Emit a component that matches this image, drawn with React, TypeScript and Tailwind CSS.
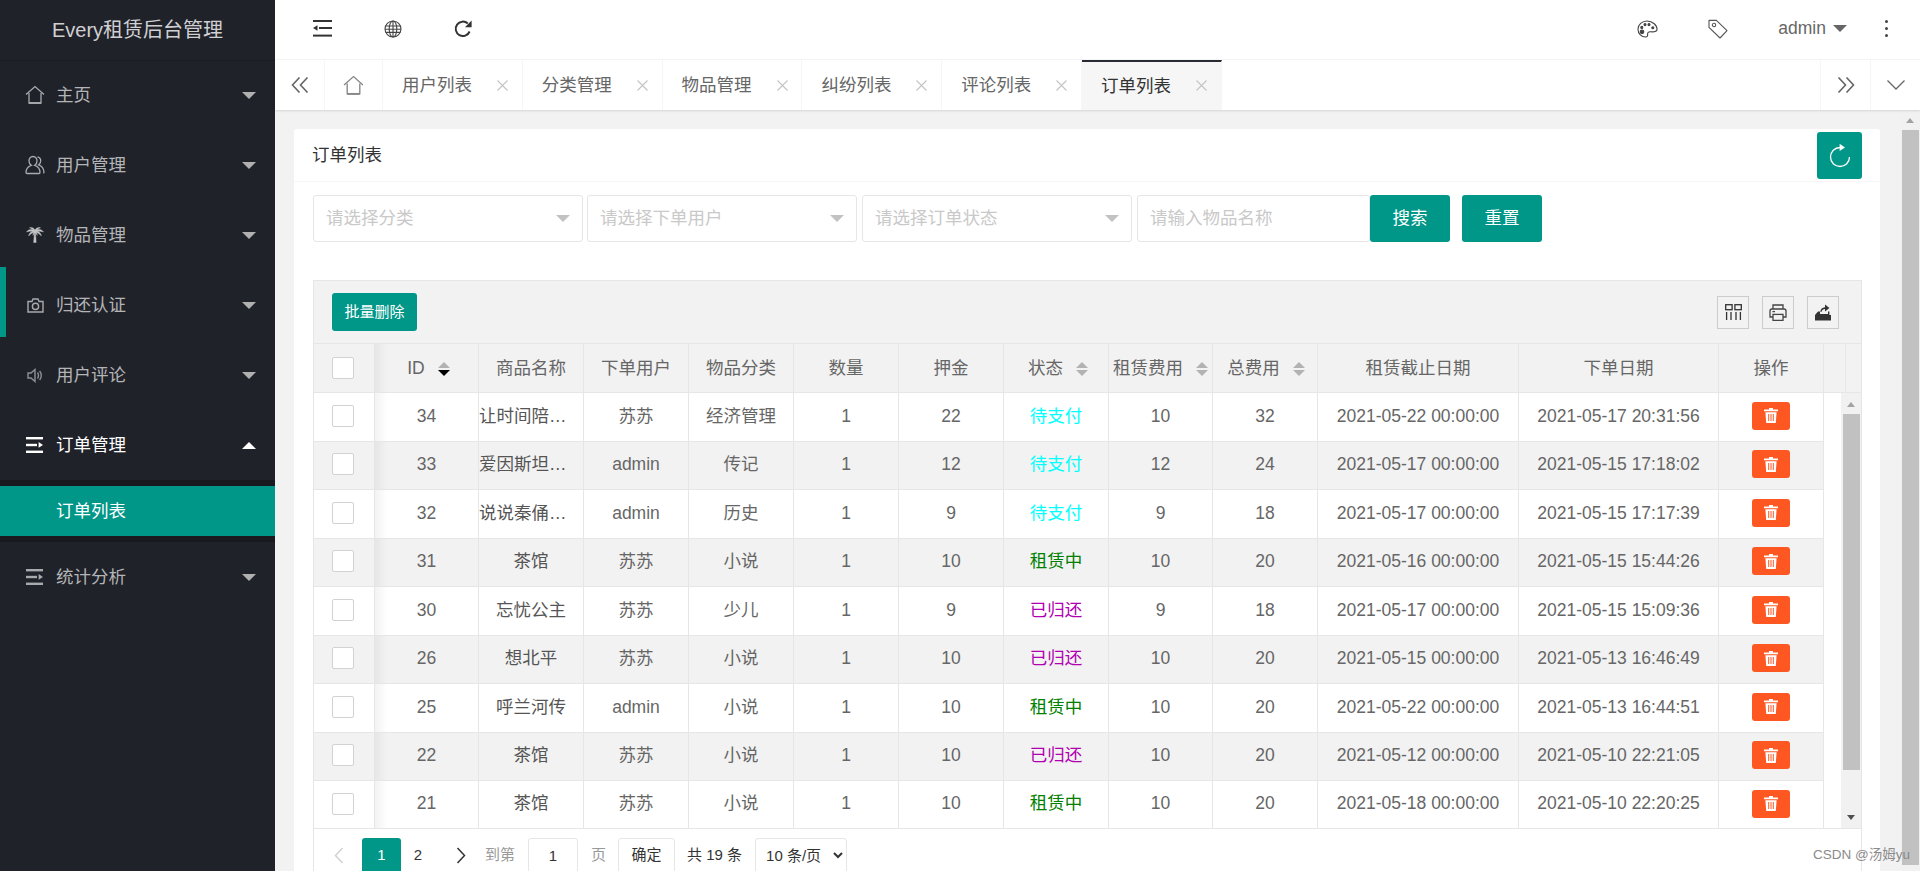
import React from "react";

const Caret = ({ up = false, color = "border-t-[#b0b0b0]" }: { up?: boolean; color?: string }) => (
  <span
    className={
      up
        ? "block w-0 h-0 border-x-[7px] border-x-transparent border-b-[7px] border-b-white"
        : `block w-0 h-0 border-x-[7px] border-x-transparent border-t-[7px] ${color}`
    }
  />
);

const Bars = ({ c }: { c: string }) => (
  <svg width="18" height="16" viewBox="0 0 18 16" fill={c}>
    <rect x="0" y="0" width="17" height="2.4" />
    <rect x="0" y="6.8" width="11" height="2.4" />
    <path d="M12.6 5 L17 7.9 L12.6 10.8 Z" />
    <rect x="0" y="13.6" width="17" height="2.4" />
  </svg>
);

const HomeIcon = ({ c = "#a9aaad", s = 20 }: { c?: string; s?: number }) => (
  <svg width={s} height={s} viewBox="0 0 20 20" fill="none" stroke={c} strokeWidth="1.3">
    <path d="M1 9.5 L10 1.5 L19 9.5" />
    <path d="M4 8 V18 H16 V8" />
    <path d="M4 18 H16" strokeWidth="1.8" />
  </svg>
);

const UserIcon = () => (
  <svg width="20" height="20" viewBox="0 0 20 20" fill="none" stroke="#a9aaad" strokeWidth="1.3">
    <path d="M8 1.5 C5.2 1.5 4 3.7 4 6 C4 8 5 9.6 6.3 10.4 C3.2 11.4 1 13.8 1 17.6 C1 18.2 1.4 18.5 2 18.5 H14 C14.6 18.5 15 18.2 15 17.6 C15 13.8 12.8 11.4 9.7 10.4 C11 9.6 12 8 12 6 C12 3.7 10.8 1.5 8 1.5 Z" />
    <path d="M12.5 1.8 C15 2.4 16 4.4 15.6 6.6 C15.4 8 14.6 9.2 13.6 9.8 C16.6 11 18.8 13.4 19 17 C19 17.6 18.8 18 18.4 18.3" />
  </svg>
);

const PalmIcon = () => (
  <svg width="18" height="16" viewBox="0 0 18 16" fill="#c2c3c5" stroke="#c2c3c5" strokeWidth="0.4">
    <path d="M9 3 C8 1 6 0 3.5 .8 C5 1.3 6.2 2 6.8 3 C4.5 2 2 2.6 .5 5 C2.6 4.3 4.8 4.2 6.4 4.6 C4.4 5.2 3 6.6 2.6 9 C4.2 7.2 6 6 7.6 5.6 C7 6.6 6.8 7.4 7 8.4 C7.6 7.2 8 6.6 8.4 6.2 L7.6 15.5 H10.2 L9.6 6.2 C10 6.6 10.6 7.2 11.2 8.4 C11.3 7.4 11 6.6 10.4 5.6 C12 6 13.8 7.2 15.4 9 C15 6.6 13.6 5.2 11.6 4.6 C13.2 4.2 15.4 4.3 17.5 5 C16 2.6 13.5 2 11.2 3 C11.8 2 13 1.3 14.5 .8 C12 0 10 1 9 3 Z" />
  </svg>
);

const CameraIcon = () => (
  <svg width="17" height="15" viewBox="0 0 17 15" fill="none" stroke="#a9aaad" strokeWidth="1.4">
    <path d="M1 3.5 H5 L6 1 H11 L12 3.5 H16 V14 H1 Z" />
    <circle cx="8.5" cy="8.4" r="3.1" />
  </svg>
);

const SpeakerIcon = () => (
  <svg width="16" height="15" viewBox="0 0 16 15" fill="none" stroke="#8f9094" strokeWidth="1.4">
    <path d="M1 5 H4 L8 1.5 V13.5 L4 10 H1 Z" />
    <path d="M10.5 4.5 C11.8 6 11.8 9 10.5 10.5" />
    <path d="M12.6 3 C14.8 5.4 14.8 9.6 12.6 12" />
  </svg>
);

const Nav = ({ icon, label, bar = false, open = false }: { icon: React.ReactNode; label: string; bar?: boolean; open?: boolean }) => (
  <div className={`relative flex h-[70px] items-center pl-[25px] pr-[19px] text-[17.5px] ${open ? "text-white" : "text-[#b4b5b7]"}`}>
    {bar && <span className="absolute left-0 top-[-3px] bottom-[3px] w-[6px] bg-[#009688]" />}
    <span className="flex w-[20px] justify-center">{icon}</span>
    <span className="ml-[11px] flex-1">{label}</span>
    <Caret up={open} />
  </div>
);

const Tab = ({ label, active = false }: { label: string; active?: boolean }) => (
  <div className={`relative flex h-full w-[139.8px] shrink-0 items-center pl-[19px] text-[17.5px] border-r border-[#f6f6f6] ${active ? "bg-[#f6f6f6] text-[#333] border-t-[2px] border-t-[#292b34]" : "text-[#666]"}`}>
    <span>{label}</span>
    <svg className={`absolute left-[114px] ${active ? "top-[18px]" : "top-[20px]"}`} width="11" height="11" viewBox="0 0 11 11" stroke="#c4c4c4" strokeWidth="1.1">
      <path d="M.5 .5 L10.5 10.5 M10.5 .5 L.5 10.5" />
    </svg>
  </div>
);

const Select = ({ ph, w }: { ph: string; w: string }) => (
  <div className={`relative h-[47px] ${w}`}>
    <input readOnly placeholder={ph} className="h-full w-full rounded-[3px] border border-[#e6e6e6] bg-white pl-[12px] text-[17.5px] placeholder:text-[#c9c9c9] outline-none" />
    <span className="absolute right-[13px] top-[20px] block h-0 w-0 border-x-[7.5px] border-x-transparent border-t-[7.5px] border-t-[#c2c2c2]" />
  </div>
);

const rows = [
  [34, "让时间陪…", "苏苏", "经济管理", 1, 22, "待支付", 10, 32, "2021-05-22 00:00:00", "2021-05-17 20:31:56"],
  [33, "爱因斯坦…", "admin", "传记", 1, 12, "待支付", 12, 24, "2021-05-17 00:00:00", "2021-05-15 17:18:02"],
  [32, "说说秦俑…", "admin", "历史", 1, 9, "待支付", 9, 18, "2021-05-17 00:00:00", "2021-05-15 17:17:39"],
  [31, "茶馆", "苏苏", "小说", 1, 10, "租赁中", 10, 20, "2021-05-16 00:00:00", "2021-05-15 15:44:26"],
  [30, "忘忧公主", "苏苏", "少儿", 1, 9, "已归还", 9, 18, "2021-05-17 00:00:00", "2021-05-15 15:09:36"],
  [26, "想北平", "苏苏", "小说", 1, 10, "已归还", 10, 20, "2021-05-15 00:00:00", "2021-05-13 16:46:49"],
  [25, "呼兰河传", "admin", "小说", 1, 10, "租赁中", 10, 20, "2021-05-22 00:00:00", "2021-05-13 16:44:51"],
  [22, "茶馆", "苏苏", "小说", 1, 10, "已归还", 10, 20, "2021-05-12 00:00:00", "2021-05-10 22:21:05"],
  [21, "茶馆", "苏苏", "小说", 1, 10, "租赁中", 10, 20, "2021-05-18 00:00:00", "2021-05-10 22:20:25"],
];

const widths = [61, 104, 105, 105, 105, 105, 105, 105, 104, 105, 201, 200, 105];

const Cols = ({ extra = false }: { extra?: boolean }) => (
  <colgroup>
    {widths.map((w, i) => (
      <col key={i} style={{ width: w }} />
    ))}
    {extra && <col style={{ width: 22 }} />}
    {extra && <col />}
  </colgroup>
);

const Check = () => <span className="mx-auto block h-[22px] w-[22px] rounded-[2px] border border-[#d2d2d2] bg-white" />;

const Sort = ({ active = false }: { active?: boolean }) => (
  <span className="ml-[13px] inline-flex flex-col gap-[2px] align-middle">
    <span className="block h-0 w-0 border-x-[6px] border-x-transparent border-b-[6px] border-b-[#b2b2b2]" />
    <span className={`block h-0 w-0 border-x-[6px] border-x-transparent border-t-[6px] ${active ? "border-t-black" : "border-t-[#b2b2b2]"}`} />
  </span>
);

const shadow = "bg-[linear-gradient(to_right,rgba(0,0,0,0.05),rgba(0,0,0,0)_12px)]";
const cell = "border-r border-b border-[#e6e6e6] text-center p-0";

const statusColor = (s: string) => (s === "待支付" ? "text-[#00ffff]" : s === "租赁中" ? "text-[#008000]" : "text-[#b000b0]");

const Trash = () => (
  <svg width="14" height="15" viewBox="0 0 14 15" fill="#fff" className="mx-auto">
    <path d="M5 0 H9 V1.5 H14 V3.2 H0 V1.5 H5 Z" />
    <path d="M1.4 4.2 H12.6 L11.8 15 H2.2 Z M4.2 6 V13 H5.2 V6 Z M6.5 6 V13 H7.5 V6 Z M8.8 6 V13 H9.8 V6 Z" fillRule="evenodd" />
  </svg>
);

const ToolBtn = ({ children }: { children: React.ReactNode }) => (
  <span className="flex h-[33px] w-[32px] items-center justify-center border border-[#ccc]">{children}</span>
);

export default function App() {
  return (
    <div className="relative flex h-screen w-full overflow-hidden bg-[#f2f2f2] text-[#666] [font-family:'Liberation_Sans','Noto_Sans_CJK_SC',sans-serif]">
      {/* Sidebar */}
      <aside className="w-[275px] shrink-0 bg-[#20222a]">
        <div className="flex h-[60px] items-center justify-center text-[20px] text-[#d0d0d2] shadow-[0_1px_1px_rgba(0,0,0,0.12)]">Every租赁后台管理</div>
        <Nav icon={<HomeIcon />} label="主页" />
        <Nav icon={<UserIcon />} label="用户管理" />
        <Nav icon={<PalmIcon />} label="物品管理" />
        <Nav icon={<CameraIcon />} label="归还认证" bar />
        <Nav icon={<SpeakerIcon />} label="用户评论" />
        <Nav icon={<Bars c="#ffffff" />} label="订单管理" open />
        <div className="bg-[#191a20] py-[6px]">
          <div className="flex h-[50px] items-center bg-[#009688] pl-[56px] text-[17.5px] text-white">订单列表</div>
        </div>
        <Nav icon={<Bars c="#a9aaad" />} label="统计分析" />
      </aside>

      {/* Main */}
      <div className="flex min-w-0 flex-1 flex-col">
        <header className="flex h-[60px] shrink-0 items-center border-b border-[#f6f6f6] bg-white pb-[2px] pl-[38px] pr-[32px]">
          <svg width="19" height="17" viewBox="0 0 19 17" fill="#333">
            <rect x="0" y="0" width="19" height="2" />
            <rect x="6" y="7" width="13" height="2" />
            <path d="M0 8 L4.5 5.2 V10.8 Z" />
            <rect x="0" y="14.6" width="19" height="2" />
          </svg>
          <svg className="ml-[52px]" width="18" height="18" viewBox="0 0 18 18" fill="none" stroke="#444" strokeWidth="1.1">
            <circle cx="9" cy="9" r="8" />
            <ellipse cx="9" cy="9" rx="3.8" ry="8" />
            <path d="M9 1 V17 M1.6 6 H16.4 M1 9.2 H17 M1.6 12.4 H16.4" />
          </svg>
          <svg className="ml-[52px]" width="18" height="18" viewBox="0 0 18 18" fill="none">
            <path d="M15.6 11.5 A7.2 7.2 0 1 1 13.8 3.5" stroke="#333" strokeWidth="2" />
            <path d="M17.6 .6 V7.2 H11 Z" fill="#333" />
          </svg>
          <div className="flex-1" />
          <svg width="21" height="18" viewBox="0 0 21 18" fill="none" stroke="#444" strokeWidth="1.1">
            <path d="M10 1 C5 1 1 4.6 1 9.2 C1 14 4.6 17 8.6 17 C10.6 17 10.8 15.4 10.6 14.2 C10.4 12.6 11.6 11.6 13.4 11.8 C15.6 12 19.6 12.4 20 9.6 C20.4 5.4 15.6 1 10 1 Z" />
            <circle cx="5" cy="11.8" r="1.8" fill="#444" />
            <circle cx="4.8" cy="7.4" r="1" fill="#444" />
            <circle cx="8" cy="4.6" r="1" fill="#444" />
            <circle cx="12" cy="4.6" r="1" fill="#444" />
            <circle cx="15.8" cy="7.8" r="1" fill="#444" />
          </svg>
          <svg className="ml-[50px]" width="20" height="20" viewBox="0 0 20 20" fill="none" stroke="#555" strokeWidth="1.1">
            <path d="M1 1.4 H8.4 L19 11.6 L12 19 L1 8.4 Z" strokeLinejoin="round" />
            <circle cx="6" cy="6" r="1.7" />
          </svg>
          <span className="ml-[50px] text-[17.5px] text-[#666]">admin</span>
          <span className="ml-[7px] block h-0 w-0 border-x-[7px] border-x-transparent border-t-[7px] border-t-[#666]" />
          <span className="ml-[38px] flex flex-col gap-[4px]">
            <span className="block h-[3px] w-[3px] rounded-full bg-[#444]" />
            <span className="block h-[3px] w-[3px] rounded-full bg-[#444]" />
            <span className="block h-[3px] w-[3px] rounded-full bg-[#444]" />
          </span>
        </header>

        {/* Tabs */}
        <div className="z-10 flex h-[50px] shrink-0 items-stretch bg-white shadow-[0_1px_2px_rgba(0,0,0,0.12)]">
          <div className="flex w-[50px] items-center justify-center border-r border-[#f6f6f6]">
            <svg width="18" height="16" viewBox="0 0 18 16" fill="none" stroke="#666" strokeWidth="1.6">
              <path d="M8.5 .5 L1.5 8 L8.5 15.5 M16.5 .5 L9.5 8 L16.5 15.5" />
            </svg>
          </div>
          <div className="flex w-[58px] items-center justify-center border-r border-[#f6f6f6]">
            <HomeIcon c="#888" s={21} />
          </div>
          <Tab label="用户列表" />
          <Tab label="分类管理" />
          <Tab label="物品管理" />
          <Tab label="纠纷列表" />
          <Tab label="评论列表" />
          <Tab label="订单列表" active />
          <div className="flex-1" />
          <div className="flex w-[50px] items-center justify-center border-l border-[#f6f6f6]">
            <svg width="18" height="16" viewBox="0 0 18 16" fill="none" stroke="#666" strokeWidth="1.6">
              <path d="M1.5 .5 L8.5 8 L1.5 15.5 M9.5 .5 L16.5 8 L9.5 15.5" />
            </svg>
          </div>
          <div className="flex w-[50px] items-center justify-center border-l border-[#f6f6f6]">
            <svg width="18" height="10" viewBox="0 0 18 10" fill="none" stroke="#666" strokeWidth="1.3">
              <path d="M.5 .5 L9 9 L17.5 .5" />
            </svg>
          </div>
        </div>

        {/* Content */}
        <div className="flex min-h-0 flex-1">
          <main className="min-w-0 flex-1 pl-[19px] pr-[20px] pt-[19px]">
            <div className="h-[800px] rounded-[3px] bg-white">
              <div className="flex h-[53px] items-center justify-between border-b border-[#f6f6f6] pl-[18px] pr-[18px] text-[17.5px] text-[#333]">
                <span>订单列表</span>
                <span className="flex h-[47px] w-[45px] items-center justify-center rounded-[3px] bg-[#009688]">
                  <svg width="22" height="25" viewBox="0 0 22 25" fill="none">
                    <path d="M11 4.5 A9.5 9.5 0 1 0 20.5 14" stroke="#fff" strokeWidth="1.3" />
                    <path d="M10.6 .8 L16 4.4 L10.6 8 Z" fill="#fff" />
                  </svg>
                </span>
              </div>

              <div className="px-[19px] pt-[13px]">
                <div className="flex">
                  <Select ph="请选择分类" w="w-[270px]" />
                  <div className="w-[4px]" />
                  <Select ph="请选择下单用户" w="w-[270px]" />
                  <div className="w-[5px]" />
                  <Select ph="请选择订单状态" w="w-[270px]" />
                  <div className="w-[5px]" />
                  <input readOnly placeholder="请输入物品名称" className="h-[47px] w-[233px] rounded-[3px] border border-[#e6e6e6] bg-white pl-[12px] text-[17.5px] placeholder:text-[#c9c9c9] outline-none" />
                  <button className="h-[47px] w-[80px] rounded-[3px] bg-[#009688] text-[17.5px] text-white">搜索</button>
                  <button className="ml-[12px] h-[47px] w-[80px] rounded-[3px] bg-[#009688] text-[17.5px] text-white">重置</button>
                </div>

                <div className="mt-[38px] w-[1549px] border-x border-t border-[#e6e6e6]">
                  <div className="flex h-[63px] items-center justify-between border-b border-[#e6e6e6] bg-[#f2f2f2] pl-[18px] pr-[22px]">
                    <button className="h-[38px] w-[85px] rounded-[3px] bg-[#009688] text-[15px] text-white">批量删除</button>
                    <div className="flex gap-[13px]">
                      <ToolBtn>
                        <svg width="17" height="16" viewBox="0 0 17 16" fill="none" stroke="#333" strokeWidth="1.3">
                          <rect x=".7" y=".7" width="6.4" height="5" />
                          <rect x="9.9" y=".7" width="6.4" height="5" />
                          <path d="M1.6 8 V16 M6 8 V16 M11 8 V16 M15.4 8 V16" />
                        </svg>
                      </ToolBtn>
                      <ToolBtn>
                        <svg width="18" height="17" viewBox="0 0 18 17" fill="none" stroke="#444" strokeWidth="1.3">
                          <path d="M4 5 V1 H14 V5" />
                          <path d="M4 13 H1 V7 C1 5.8 2 5 3 5 H15 C16 5 17 5.8 17 7 V13 H14" />
                          <rect x="4" y="10.4" width="10" height="6" />
                          <path d="M3.4 7.6 H6" />
                        </svg>
                      </ToolBtn>
                      <ToolBtn>
                        <svg width="16" height="17" viewBox="0 0 16 17" fill="#333">
                          <path d="M0 11 L3 7.4 H5 V10 H13 V7.4 H14.4 V11 H16 V16.6 H0 Z" />
                          <path d="M5.4 8 C5.4 5 7.4 3.4 10 3.2 V.4 L14.4 4 L10 7.6 V5 C8.4 5 6.8 6 6.4 8 Z" />
                        </svg>
                      </ToolBtn>
                    </div>
                  </div>

                  <table className="w-[1547px] table-fixed border-separate border-spacing-0 bg-[#f2f2f2] text-[17.5px] text-[#666]">
                    <Cols extra />
                    <thead>
                      <tr className="h-[49px]">
                        <th className={`${cell} pr-[2px] font-normal`}><Check /></th>
                        <th className={`${cell} ${shadow} pl-[4px] font-normal`}>ID<Sort active /></th>
                        <th className={`${cell} font-normal`}>商品名称</th>
                        <th className={`${cell} font-normal`}>下单用户</th>
                        <th className={`${cell} font-normal`}>物品分类</th>
                        <th className={`${cell} font-normal`}>数量</th>
                        <th className={`${cell} font-normal`}>押金</th>
                        <th className={`${cell} pl-[4px] font-normal`}>状态<Sort /></th>
                        <th className={`${cell} whitespace-nowrap font-normal`}>租赁费用<Sort /></th>
                        <th className={`${cell} pl-[2px] whitespace-nowrap font-normal`}>总费用<Sort /></th>
                        <th className={`${cell} font-normal`}>租赁截止日期</th>
                        <th className={`${cell} font-normal`}>下单日期</th>
                        <th className={`${cell} font-normal`}>操作</th>
                        <th className={`${cell} font-normal`}></th>
                        <th className="border-b border-[#e6e6e6] p-0"></th>
                      </tr>
                    </thead>
                  </table>

                  <div className="flex border-b border-[#e6e6e6] bg-white">
                    <table className="w-[1510px] shrink-0 table-fixed border-separate border-spacing-0 text-[17.5px] text-[#666]">
                      <Cols />
                      <tbody>
                        {rows.map((r, i) => {
                          const c = `${cell} pb-[2px] ${i === 8 ? "border-b-0" : ""}`;
                          return (
                            <tr key={i} className={`${i === 8 ? "h-[47px]" : "h-[48.5px]"} ${i % 2 ? "bg-[#f2f2f2]" : "bg-white"}`}>
                              <td className={`${c} pr-[2px]`}><Check /></td>
                              <td className={`${c} ${shadow}`}>{r[0]}</td>
                              <td className={`${c} text-[#555]`}>
                                <div className={`whitespace-nowrap ${String(r[1]).endsWith("…") ? "text-left" : ""}`}>{r[1]}</div>
                              </td>
                              <td className={c}>{r[2]}</td>
                              <td className={c}>{r[3]}</td>
                              <td className={c}>{r[4]}</td>
                              <td className={c}>{r[5]}</td>
                              <td className={`${c} ${statusColor(String(r[6]))}`}>{r[6]}</td>
                              <td className={c}>{r[7]}</td>
                              <td className={c}>{r[8]}</td>
                              <td className={c}>{r[9]}</td>
                              <td className={c}>{r[10]}</td>
                              <td className={c}>
                                <span className="mx-auto flex h-[28px] w-[38px] items-center justify-center rounded-[3px] bg-[#ff5722]"><Trash /></span>
                              </td>
                            </tr>
                          );
                        })}
                      </tbody>
                    </table>
                    <div className="ml-[17px] flex w-[20px] flex-col items-center bg-[#f1f1f1]">
                      <span className="mt-[9px] block h-0 w-0 border-x-[4.5px] border-x-transparent border-b-[5px] border-b-[#a3a3a3]" />
                      <span className="mt-[7px] h-[356px] w-[17px] bg-[#c1c1c1]" />
                      <div className="flex-1" />
                      <span className="mb-[8px] block h-0 w-0 border-x-[4.5px] border-x-transparent border-t-[5px] border-t-[#505050]" />
                    </div>
                  </div>

                  <div className="flex h-[50px] items-start pl-[20px] pt-[9px] text-[15px] text-[#666]">
                    <svg className="mt-[9px]" width="10" height="17" viewBox="0 0 10 17" fill="none" stroke="#d2d2d2" strokeWidth="1.5">
                      <path d="M8.5 1 L1.5 8.5 L8.5 16" />
                    </svg>
                    <span className="ml-[18px] flex h-[35px] w-[39px] items-center justify-center rounded-[3px] bg-[#009688] text-white">1</span>
                    <span className="flex h-[35px] w-[34px] items-center justify-center text-[#333]">2</span>
                    <svg className="ml-[21px] mt-[9px]" width="10" height="17" viewBox="0 0 10 17" fill="none" stroke="#333" strokeWidth="1.5">
                      <path d="M1.5 1 L8.5 8.5 L1.5 16" />
                    </svg>
                    <span className="ml-[19px] flex h-[35px] items-center text-[#999]">到第</span>
                    <input readOnly value="1" className="ml-[13px] h-[35px] w-[50px] rounded-[3px] border border-[#e6e6e6] bg-white text-center text-[15px] text-[#333] outline-none" />
                    <span className="ml-[13px] flex h-[35px] items-center text-[#999]">页</span>
                    <span className="ml-[12px] flex h-[35px] w-[57px] items-center justify-center rounded-[3px] border border-[#e6e6e6] text-[#333]">确定</span>
                    <span className="ml-[12px] flex h-[35px] items-center text-[#333]">共 19 条</span>
                    <select defaultValue="10" className="ml-[13px] h-[35px] w-[92px] rounded-[3px] border border-[#e6e6e6] bg-white pl-[6px] text-[15px] text-[#333] outline-none">
                      <option value="10">10 条/页</option>
                    </select>
                  </div>
                </div>
              </div>
            </div>
          </main>

          {/* page scrollbar */}
          <div className="flex w-[20px] shrink-0 flex-col items-center bg-[#f1f1f1]">
            <span className="mt-[8px] block h-0 w-0 border-x-[4.5px] border-x-transparent border-b-[5px] border-b-[#a3a3a3]" />
            <span className="mt-[7px] h-[735px] w-[17px] bg-[#c1c1c1]" />
          </div>
        </div>
      </div>

      <span className="absolute left-[1813px] top-[845px] text-[13.5px] text-[#8a8a8a]">CSDN @汤姆yu</span>
    </div>
  );
}
